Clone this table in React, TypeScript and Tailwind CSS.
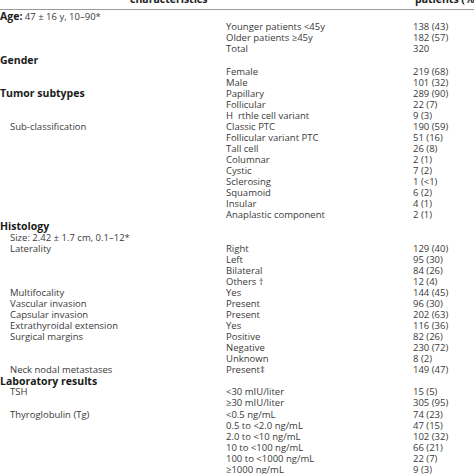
type Row = { head?: string; headRest?: string; label?: string; value?: string; sub?: string }

const rows: Row[] = [
  { head: 'Age:', headRest: ' 47 ± 16 y, 10–90*' },
  { value: 'Younger patients <45y', sub: '138 (43)' },
  { value: 'Older patients ≥45y', sub: '182 (57)' },
  { value: 'Total', sub: '320' },
  { head: 'Gender' },
  { value: 'Female', sub: '219 (68)' },
  { value: 'Male', sub: '101 (32)' },
  { head: 'Tumor subtypes', value: 'Papillary', sub: '289 (90)' },
  { value: 'Follicular', sub: '22 (7)' },
  { value: 'H\u00a0\u00a0rthle cell variant', sub: '9 (3)' },
  { label: 'Sub-classification', value: 'Classic PTC', sub: '190 (59)' },
  { value: 'Follicular variant PTC', sub: '51 (16)' },
  { value: 'Tall cell', sub: '26 (8)' },
  { value: 'Columnar', sub: '2 (1)' },
  { value: 'Cystic', sub: '7 (2)' },
  { value: 'Sclerosing', sub: '1 (<1)' },
  { value: 'Squamoid', sub: '6 (2)' },
  { value: 'Insular', sub: '4 (1)' },
  { value: 'Anaplastic component', sub: '2 (1)' },
  { head: 'Histology' },
  { label: 'Size: 2.42 ± 1.7 cm, 0.1–12*' },
  { label: 'Laterality', value: 'Right', sub: '129 (40)' },
  { value: 'Left', sub: '95 (30)' },
  { value: 'Bilateral', sub: '84 (26)' },
  { value: 'Others †', sub: '12 (4)' },
  { label: 'Multifocality', value: 'Yes', sub: '144 (45)' },
  { label: 'Vascular invasion', value: 'Present', sub: '96 (30)' },
  { label: 'Capsular invasion', value: 'Present', sub: '202 (63)' },
  { label: 'Extrathyroidal extension', value: 'Yes', sub: '116 (36)' },
  { label: 'Surgical margins', value: 'Positive', sub: '82 (26)' },
  { value: 'Negative', sub: '230 (72)' },
  { value: 'Unknown', sub: '8 (2)' },
  { label: 'Neck nodal metastases', value: 'Present‡', sub: '149 (47)' },
  { head: 'Laboratory results' },
  { label: 'TSH', value: '<30 mIU/liter', sub: '15 (5)' },
  { value: '≥30 mIU/liter', sub: '305 (95)' },
  { label: 'Thyroglobulin (Tg)', value: '<0.5 ng/mL', sub: '74 (23)' },
  { value: '0.5 to <2.0 ng/mL', sub: '47 (15)' },
  { value: '2.0 to <10 ng/mL', sub: '102 (32)' },
  { value: '10 to <100 ng/mL', sub: '66 (21)' },
  { value: '100 to <1000 ng/mL', sub: '22 (7)' },
  { value: '≥1000 ng/mL', sub: '9 (3)' },
]

export default function App() {
  return (
    <div className="w-[474px] h-[474px] overflow-hidden bg-white text-[#3a3a3a] font-['Open_Sans',sans-serif] text-[9.5px]">
      {/* header, top half cut off in the source */}
      <div className="-mt-[6px] flex items-center h-[11px] font-bold text-[10.5px] text-[#222] whitespace-nowrap">
        <div className="w-[415px] shrink-0 pl-[130px]">characteristics</div>
        <div className="shrink-0">patients (%)</div>
      </div>
      <div className="mt-[4px] border-b-[1.5px] border-[#9a9a9a]" />
      <div className="pt-[0.5px]">
        {rows.map((r, i) => (
          <div key={i} className="flex items-center h-[11.07px] leading-none whitespace-nowrap">
            <div className="w-[226px] shrink-0">
              {r.head ? (
                <span className="text-[10.5px] text-[#1a1a1a] font-bold">
                  {r.head}
                  {r.headRest && <span className="font-normal text-[9.5px] text-[#3a3a3a]">{r.headRest}</span>}
                </span>
              ) : (
                r.label && <span className="pl-[10px]">{r.label}</span>
              )}
            </div>
            <div className="w-[187px] shrink-0">{r.value}</div>
            <div>{r.sub}</div>
          </div>
        ))}
      </div>
    </div>
  )
}
